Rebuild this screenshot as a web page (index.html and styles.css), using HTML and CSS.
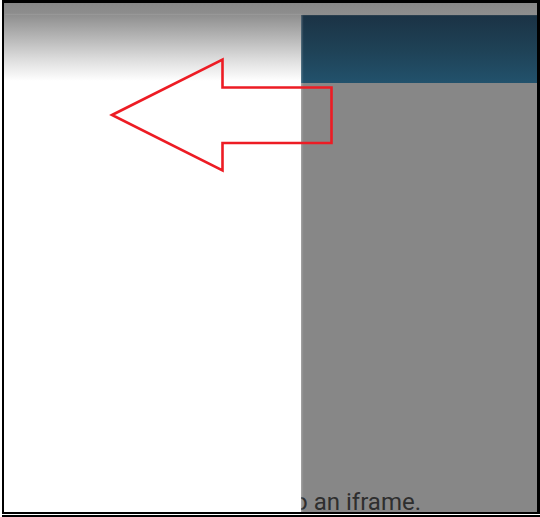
FILE: index.html
```html
<!DOCTYPE html>
<html lang="en">
<head>
<meta charset="utf-8">
<title>Drawer</title>
<link rel="stylesheet" href="styles.css">
</head>
<body>
<div class="frame">
  <div class="screen">
    <div class="topbar"></div>
    <div class="app">
      <header class="header"></header>
      <main class="content">
        <p class="note">Load a page into an iframe.</p>
      </main>
      <aside class="drawer"></aside>
    </div>
  </div>
</div>
<div class="baseline-rule"></div>
<svg class="arrow" width="540" height="517" viewBox="0 0 540 517" aria-hidden="true">
  <polygon points="112,115 222.5,59.5 222.5,87.5 331.5,87.5 331.5,143 222.5,143 222.5,170.5" fill="none" stroke="#ed1c24" stroke-width="2.6" stroke-linejoin="miter"/>
</svg>
</body>
</html>
```
FILE: styles.css
```css
html, body {
  margin: 0;
  padding: 0;
  background: #fff;
}
body {
  width: 540px;
  height: 517px;
  overflow: hidden;
  position: relative;
  padding-left: 2px;
  box-sizing: border-box;
  font-family: Roboto, "Noto Sans", sans-serif;
}
.frame {
  width: 538px;
  height: 514px;
  box-sizing: border-box;
  border-top: 3px solid #000;
  border-left: 2px solid #000;
  border-right: 3px solid #000;
  border-bottom: 2px solid #000;
  overflow: hidden;
}
.baseline-rule {
  margin-top: 1px;
  width: 538px;
  height: 2px;
  background: #000;
}
.screen {
  height: 100%;
  display: flex;
  flex-direction: column;
}
.topbar {
  height: 12px;
  flex: none;
  background: linear-gradient(#878787, #8e8e8e);
}
.app {
  flex: 1;
  position: relative;
  display: flex;
  flex-direction: column;
  min-height: 0;
}
.header {
  height: 68px;
  flex: none;
  background: linear-gradient(#1b3345, #1f4358 55%, #22526c);
  border-top: 1px solid #2a3f4e;
  box-sizing: border-box;
}
.content {
  flex: 1;
  background: #878787;
  display: flex;
  flex-direction: column;
  justify-content: flex-end;
}
.note {
  margin: 0 0 -4px 0;
  padding-right: 116px;
  text-align: right;
  white-space: nowrap;
  font-size: 24px;
  line-height: 28px;
  color: #2e2e2e;
}
.drawer {
  position: absolute;
  left: 0;
  top: 0;
  bottom: 0;
  width: 297px;
  background: linear-gradient(#8f8f8f 0, #b5b5b5 22px, #dedede 45px, #fff 66px);
  box-shadow: 1px 0 2px rgba(255, 255, 255, 0.3);
}
.arrow {
  position: absolute;
  left: 0;
  top: 0;
  pointer-events: none;
}
```
